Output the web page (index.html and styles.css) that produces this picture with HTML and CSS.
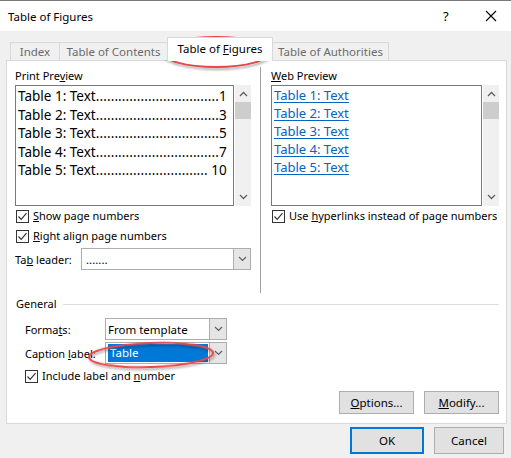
FILE: index.html
```html
<!DOCTYPE html>
<html>
<head>
<meta charset="utf-8">
<link rel="stylesheet" href="styles.css">
</head>
<body>
<div class="dialog">
  <div class="titlebar">
    <span class="title">Table of Figures</span>
    <span class="help">?</span>
    <span class="close"><svg width="12" height="12" viewBox="0 0 12 12"><path d="M1 1 L11 11 M11 1 L1 11" stroke="#000" stroke-width="1.1" fill="none"/></svg></span>
  </div>
  <div class="body">
    <div class="tabs">
      <div class="tab t-index"><span>Index</span></div>
      <div class="tab t-toc"><span>Table of Contents</span></div>
      <div class="tab active t-tof"><span>Table of <u>F</u>igures</span></div>
      <div class="tab t-toa"><span>Table of Authorities</span></div>
    </div>
    <div class="panel">
      <div class="top">
        <div class="col left">
          <div class="label">Print Pre<u>v</u>iew</div>
          <div class="preview-row">
            <div class="preview">
              <div class="entry"><span>Table 1: Text</span><span class="dots">.................................</span><span>1</span></div>
              <div class="entry"><span>Table 2: Text</span><span class="dots">.................................</span><span>3</span></div>
              <div class="entry"><span>Table 3: Text</span><span class="dots">.................................</span><span>5</span></div>
              <div class="entry"><span>Table 4: Text</span><span class="dots">.................................</span><span>7</span></div>
              <div class="entry"><span>Table 5: Text</span><span class="dots">..............................</span><span>&nbsp;10</span></div>
            </div>
            <div class="scrollbar">
              <svg class="arrow" width="9" height="6" viewBox="0 0 9 6"><path d="M1 5 L4.5 1.5 L8 5" stroke="#606060" stroke-width="1.3" fill="none"/></svg>
              <div class="thumb"></div>
              <div class="track"></div>
              <svg class="arrow" width="9" height="6" viewBox="0 0 9 6"><path d="M1 1 L4.5 4.5 L8 1" stroke="#606060" stroke-width="1.3" fill="none"/></svg>
            </div>
          </div>
          <div class="check-row"><span class="cb"><svg width="11" height="11" viewBox="0 0 11 11"><path d="M1.5 5.5 L4.2 8.3 L9.5 2.2" stroke="#333" stroke-width="1.2" fill="none"/></svg></span><span><u>S</u>how page numbers</span></div>
          <div class="check-row"><span class="cb"><svg width="11" height="11" viewBox="0 0 11 11"><path d="M1.5 5.5 L4.2 8.3 L9.5 2.2" stroke="#333" stroke-width="1.2" fill="none"/></svg></span><span><u>R</u>ight align page numbers</span></div>
          <div class="field-row leader-row">
            <span class="field-label leader-label">Ta<u>b</u> leader:</span>
            <div class="combo leader-combo"><span class="combo-text">.......</span><span class="combo-btn"><svg width="9" height="6" viewBox="0 0 9 6"><path d="M1 1 L4.5 4.5 L8 1" stroke="#606060" stroke-width="1.2" fill="none"/></svg></span></div>
          </div>
        </div>
        <div class="divider"></div>
        <div class="col right">
          <div class="label"><u>W</u>eb Preview</div>
          <div class="preview-row">
            <div class="preview web">
              <div class="link">Table 1: Text</div>
              <div class="link">Table 2: Text</div>
              <div class="link">Table 3: Text</div>
              <div class="link">Table 4: Text</div>
              <div class="link">Table 5: Text</div>
            </div>
            <div class="scrollbar">
              <svg class="arrow" width="9" height="6" viewBox="0 0 9 6"><path d="M1 5 L4.5 1.5 L8 5" stroke="#606060" stroke-width="1.3" fill="none"/></svg>
              <div class="thumb"></div>
              <div class="track"></div>
              <svg class="arrow" width="9" height="6" viewBox="0 0 9 6"><path d="M1 1 L4.5 4.5 L8 1" stroke="#606060" stroke-width="1.3" fill="none"/></svg>
            </div>
          </div>
          <div class="check-row"><span class="cb"><svg width="11" height="11" viewBox="0 0 11 11"><path d="M1.5 5.5 L4.2 8.3 L9.5 2.2" stroke="#333" stroke-width="1.2" fill="none"/></svg></span><span>Use <u>h</u>yperlinks instead of page numbers</span></div>
        </div>
      </div>
      <div class="general">
        <div class="group-head"><span>General</span><span class="group-line"></span></div>
        <div class="field-row g-row first">
          <span class="field-label g-label">Forma<u>t</u>s:</span>
          <div class="combo g-combo"><span class="combo-text">From template</span><span class="combo-btn"><svg width="9" height="6" viewBox="0 0 9 6"><path d="M1 1 L4.5 4.5 L8 1" stroke="#606060" stroke-width="1.2" fill="none"/></svg></span></div>
        </div>
        <div class="field-row g-row">
          <span class="field-label g-label">Caption <u>l</u>abel:</span>
          <div class="combo g-combo"><span class="combo-text"><span class="selected">Table</span></span><span class="combo-btn"><svg width="9" height="6" viewBox="0 0 9 6"><path d="M1 1 L4.5 4.5 L8 1" stroke="#606060" stroke-width="1.2" fill="none"/></svg></span></div>
        </div>
        <div class="check-row g-check"><span class="cb"><svg width="11" height="11" viewBox="0 0 11 11"><path d="M1.5 5.5 L4.2 8.3 L9.5 2.2" stroke="#333" stroke-width="1.2" fill="none"/></svg></span><span>Include label and <u>n</u>umber</span></div>
      </div>
      <div class="panel-buttons">
        <div class="btn"><span><u>O</u>ptions...</span></div>
        <div class="btn"><span><u>M</u>odify...</span></div>
      </div>
    </div>
    <div class="footer">
      <div class="btn ok">OK</div>
      <div class="btn cancel">Cancel</div>
    </div>
  </div>
  <svg class="annot" width="511" height="458" viewBox="0 0 511 458">
    <defs>
      <filter id="sh" x="-20%" y="-50%" width="140%" height="200%">
        <feDropShadow dx="1" dy="2" stdDeviation="1.2" flood-color="#000" flood-opacity="0.35"/>
      </filter>
    </defs>
    <ellipse cx="216" cy="51" rx="54" ry="15" fill="none" stroke="#e8474a" stroke-width="2" filter="url(#sh)"/>
    <ellipse cx="151" cy="354" rx="62" ry="12" fill="none" stroke="#e8474a" stroke-width="2" filter="url(#sh)" transform="rotate(-2 151 354)"/>
  </svg>
</div>
</body>
</html>
```

FILE: styles.css
```css
* { box-sizing: border-box; }
html, body { margin: 0; padding: 0; background: #f0f0f0; }
body { font-family: "Noto Sans", "Open Sans", sans-serif; font-size: 11px; color: #000; }
u { text-decoration: underline; text-underline-offset: 1px; }

.dialog {
  position: relative;
  width: 511px;
  height: 458px;
  background: #f0f0f0;
  border-top: 1px solid #7a7a7a;
  display: flex;
  flex-direction: column;
  overflow: hidden;
}

.titlebar {
  height: 30px;
  background: #fff;
  display: flex;
  align-items: center;
  padding-left: 8px;
  font-size: 11.5px;
}
.title { flex: 1; }
.help { width: 20px; margin-right: 22px; font-size: 13px; }
.close { width: 12px; margin-right: 14px; display: flex; }

.body {
  flex: 1;
  display: flex;
  flex-direction: column;
  padding: 0 4px 0 6px;
}

.tabs {
  display: flex;
  align-items: flex-end;
  height: 24px;
  margin-top: 6px;
  margin-bottom: -1px;
  padding-left: 4px;
  position: relative;
  z-index: 1;
}
.tab {
  height: 18px;
  margin-bottom: 1px;
  border: 1px solid #d9d9d9;
  border-bottom: none;
  margin-left: -1px;
  display: flex;
  align-items: center;
  justify-content: center;
  color: #6b6b6b;
  background: #f0f0f0;
  font-size: 11.5px;
  white-space: nowrap;
}
.tab.active {
  height: 24px;
  margin-bottom: 0;
  background: #fff;
  color: #000;
  padding-bottom: 2px;
}
.t-index { width: 50px; margin-left: 0; }
.t-toc { width: 109px; }
.t-tof { width: 106px; }
.t-toa { width: 117px; }

.panel {
  height: 364px;
  background: #fff;
  border: 1px solid #d9d9d9;
  display: flex;
  flex-direction: column;
  padding: 6px 7px 0 8px;
}

.top {
  display: flex;
  height: 226px;
}
.col { display: flex; flex-direction: column; }
.left { width: 236px; }
.right { flex: 1; }
.divider {
  width: 1px;
  background: #a0a0a0;
  margin: 0 10px 0 9px;
}

.label { line-height: 16px; margin-top: 1px; }

.preview-row {
  display: flex;
  height: 121px;
  margin-top: 1px;
}
.preview {
  flex: 1;
  border: 1px solid #7a7a7a;
  padding: 1px 7px 0 2px;
  font-size: 13.5px;
  overflow: hidden;
}
.entry {
  display: flex;
  justify-content: space-between;
  line-height: 18.5px;
  white-space: nowrap;
}
.dots { flex: 1; text-align: left; letter-spacing: 0.12px; }
.preview.web { padding-left: 2px; padding-top: 0; font-size: 13px; }
.link {
  color: #0563c1;
  text-decoration: underline;
  text-decoration-thickness: 1px;
  text-underline-offset: 2px;
  line-height: 18px;
}

.scrollbar {
  width: 16px;
  margin-left: 1px;
  background: #f0f0f0;
  display: flex;
  flex-direction: column;
  align-items: center;
}
.scrollbar .arrow { margin-top: 6px; flex: none; }
.scrollbar .arrow:last-child { margin-top: 0; margin-bottom: 6px; }
.thumb { width: 16px; height: 17px; background: #cdcdcd; margin-top: 5px; }
.track { flex: 1; }

.check-row {
  display: flex;
  align-items: center;
  height: 20px;
  line-height: 20px;
  white-space: nowrap;
}
.cb {
  width: 13px;
  height: 13px;
  border: 1px solid #333;
  background: #fff;
  margin: 0 4px 0 1px;
  display: flex;
  align-items: center;
  justify-content: center;
  flex: none;
}

.field-row { display: flex; align-items: center; }
.leader-row { margin-top: 2px; }
.leader-label { width: 66px; }
.combo {
  height: 22px;
  border: 1px solid #adadad;
  display: flex;
  background: #fff;
}
.leader-combo { width: 170px; }
.combo-text {
  flex: 1;
  display: flex;
  align-items: center;
  padding-left: 4px;
  font-size: 11.5px;
}
.combo-btn {
  width: 17px;
  background: #e5e5e5;
  border-left: 1px solid #adadad;
  display: flex;
  align-items: center;
  justify-content: center;
}

.general { display: flex; flex-direction: column; }
.group-head {
  display: flex;
  align-items: center;
  line-height: 16px;
  margin-top: 3px;
  padding-left: 1px;
}
.group-line { flex: 1; border-top: 1px solid #dcdcdc; margin-left: 6px; }
.g-row { margin-top: 2px; padding-left: 10px; }
.g-row.first { margin-top: 6px; }
.g-label { width: 80px; }
.g-combo { width: 122px; }
.g-combo .combo-text { padding-left: 2px; }
.selected {
  background: #0078d7;
  color: #fff;
  width: 100px;
  height: 18px;
  line-height: 18px;
  padding-left: 2px;
}
.g-check { margin-top: 2px; padding-left: 9px; }

.panel-buttons {
  display: flex;
  justify-content: flex-end;
  gap: 10px;
  margin-top: 5px;
}
.btn {
  width: 75px;
  height: 23px;
  background: #e1e1e1;
  border: 1px solid #adadad;
  display: flex;
  align-items: center;
  justify-content: center;
  font-size: 11.5px;
}

.footer {
  display: flex;
  justify-content: flex-end;
  gap: 10px;
  margin-top: 3px;
  padding-right: 3px;
}
.footer .btn { height: 27px; }
.footer .btn.ok { width: 74px; }
.footer .btn.cancel { width: 70px; }
.btn.ok { border: 2px solid #0078d7; }

.annot { position: absolute; left: 0; top: 0; pointer-events: none; }
```
